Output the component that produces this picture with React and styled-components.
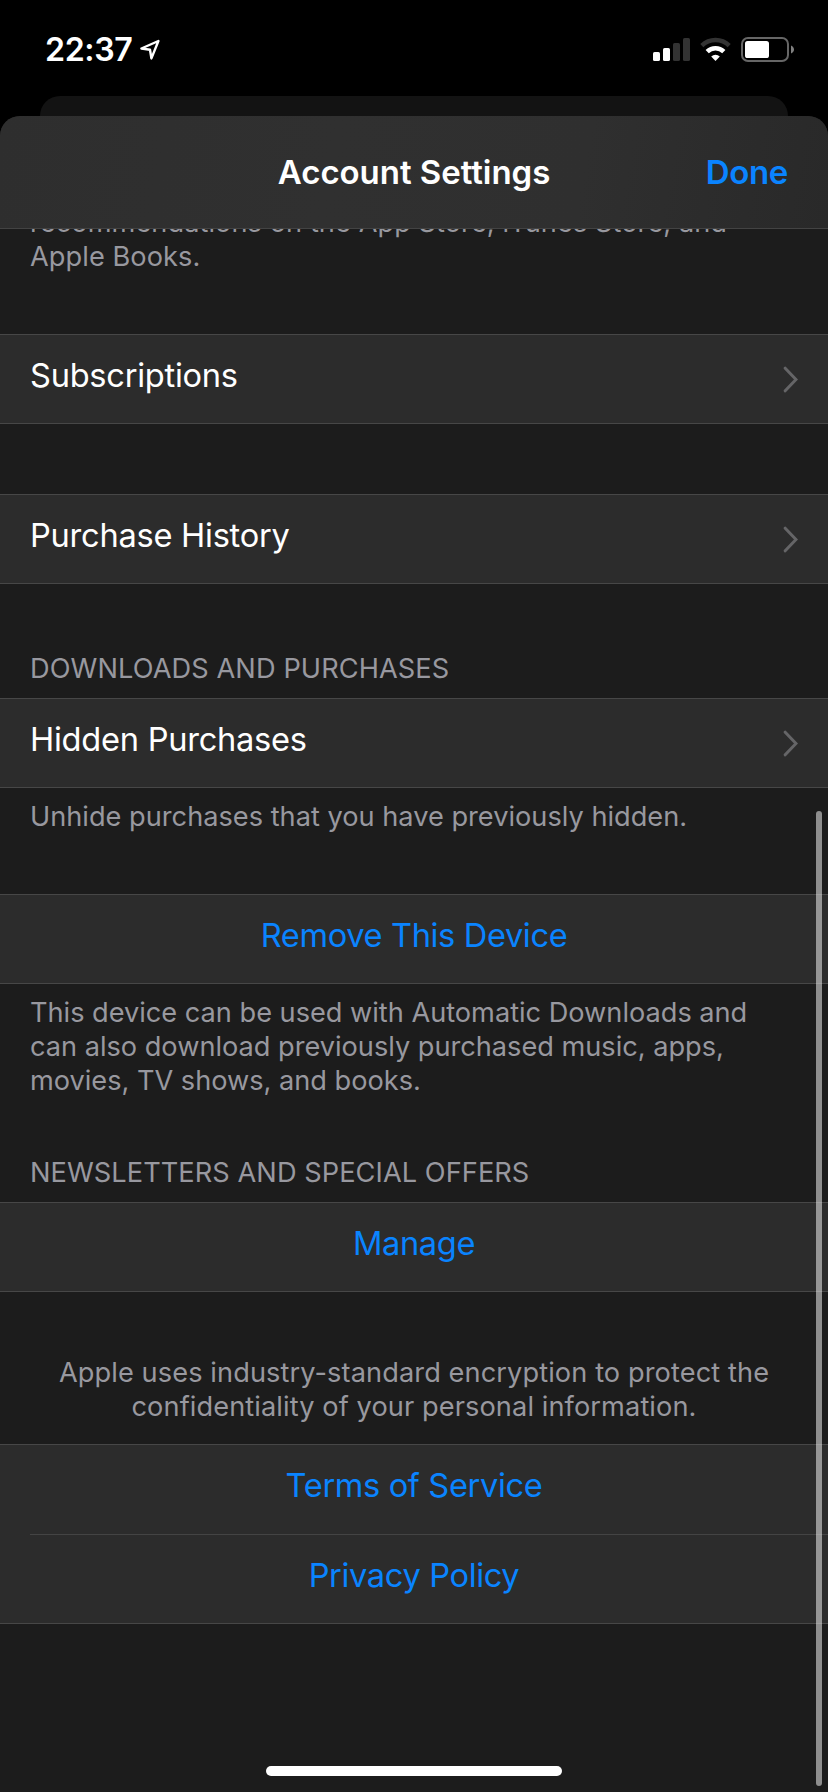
import styled, {createGlobalStyle} from "styled-components";

const GlobalStyle = createGlobalStyle`
* { box-sizing: border-box; }
body {
margin: 0;
background: #000;
font-family: Inter, "Liberation Sans", sans-serif;
}
`;
const Screen = styled.div`
display: flex;
flex-direction: column;
position: relative;
width: 828px;
height: 1792px;
overflow: hidden;
background: #000;
`;
const StatusBar = styled.div`
display: flex;
justify-content: space-between;
height: 96px;
padding: 30px 34px 0 45px;
`;
const Clock = styled.div`
display: flex;
height: 40px;
gap: 7px;
color: #fff;
font-size: 32.2px;
font-weight: 600;
letter-spacing: -0.4px;
line-height: 40px;
`;
const LocationIcon = styled.svg`
margin-top: 8px;
`;
const StatusIcons = styled.div`
display: flex;
gap: 10px;
padding-top: 7px;
`;
const BackCard = styled.div`
flex: none;
height: 20px;
margin: 0 40px;
border-radius: 20px 20px 0 0;
background: #131313;
`;
const Sheet = styled.div`
flex: 1;
min-height: 0;
display: flex;
flex-direction: column;
overflow: hidden;
border-radius: 20px 20px 0 0;
background: #1c1c1c;
`;
const SheetHeader = styled.div`
flex: none;
display: grid;
grid-template-columns: 1fr auto 1fr;
height: 113px;
padding: 36px 40px 0;
border-bottom: 1px solid #434343;
background: linear-gradient(100deg, #2e2e2e, #303030 40%, #2f2f2f 70%, #292929);
`;
const Title = styled.div`
grid-column: 2;
color: #fff;
font-size: 33px;
font-weight: 600;
letter-spacing: -0.05px;
line-height: 40px;
`;
const DoneButton = styled.div`
justify-self: end;
color: #0a84ff;
font-size: 33px;
font-weight: 600;
letter-spacing: -0.35px;
line-height: 40px;
`;
const Content = styled.div`
flex: 1;
min-height: 0;
overflow: hidden;
`;
const Note = styled.div`
margin: ${props => props.$margin};
padding: 0 30px;
color: #98989f;
font-size: 27.2px;
letter-spacing: ${props => props.$tracking || '0'};
line-height: 34px;
text-align: ${props => props.$center ? 'center' : 'left'};
white-space: nowrap;
`;
const Group = styled.div`
margin-bottom: ${props => props.$gap || '0'};
border-top: 1px solid #474747;
border-bottom: 1px solid #474747;
background: #2c2c2c;
`;
const Row = styled.div`
display: flex;
justify-content: ${props => props.$link ? 'center' : 'space-between'};
height: ${props => props.$divided ? '89px' : '88px'};
padding: 20px 30px 0;
color: ${props => props.$link ? '#0a84ff' : '#fff'};
font-size: 32.6px;
letter-spacing: ${props => props.$link ? '-0.35px' : '-0.25px'};
line-height: 40px;
`;
const Divider = styled.div`
height: 1px;
margin-left: 30px;
background: #444;
`;
const Chevron = styled.svg`
margin-top: 11px;
`;
const ScrollThumb = styled.div`
position: absolute;
top: 811px;
right: 6px;
width: 6px;
height: 975px;
border-radius: 3px;
background: rgba(255, 255, 255, 0.5);
`;
const HomeIndicator = styled.div`
position: absolute;
left: 266px;
bottom: 16px;
width: 296px;
height: 10px;
border-radius: 5px;
background: #fff;
`;

const Signal = () => (
    <svg width="37" height="25" viewBox="0 0 37 25">
        <rect x="0" y="15" width="7" height="9" rx="1.6" fill="#fff"/>
        <rect x="10" y="11" width="7" height="13" rx="1.6" fill="#fff"/>
        <rect x="20" y="6" width="7" height="18" rx="1.6" fill="#333"/>
        <rect x="30" y="1" width="7" height="23" rx="1.6" fill="#333"/>
    </svg>
)
const Wifi = () => (
    <svg width="31" height="25" viewBox="0 0 31 25">
        <path d="M1.8 8.6a19.6 19.6 0 0 1 27.4 0" fill="none" stroke="#333" strokeWidth="4.4"/>
        <path d="M7.2 14.6a12 12 0 0 1 16.6 0" fill="none" stroke="#fff" strokeWidth="4.6"/>
        <path d="M15.5 24l-4.3-4.5a6.4 6.4 0 0 1 8.6 0z" fill="#fff"/>
    </svg>
)
const Battery = () => (
    <svg width="53" height="25" viewBox="0 0 53 25">
        <rect x="1" y="1" width="46" height="23" rx="6" fill="none" stroke="#666" strokeWidth="2"/>
        <rect x="4" y="4" width="24" height="17" rx="2.6" fill="#fff"/>
        <path d="M50 8.4c4 1.6 4 6.6 0 8.2z" fill="#808080"/>
    </svg>
)

const NavRow = ({label, gap}) => (
    <Group $gap={gap}>
        <Row>
            <span>{label}</span>
            <Chevron width="16" height="28" viewBox="0 0 16 28">
                <path d="M3.2 2.2L14 13.5L3.2 24.8" fill="none" stroke="#656567" strokeWidth="3" strokeLinecap="round"/>
            </Chevron>
        </Row>
    </Group>
)
// one or more blue actions, split by an inset line
const LinkGroup = ({labels}) => (
    <Group>
        {labels.map((label, i) => (
            <div key={label}>
                {i > 0 && <Divider/>}
                <Row $link $divided={i < labels.length - 1}>{label}</Row>
            </div>
        ))}
    </Group>
)

const App = () => {
    return (
        <Screen>
            <GlobalStyle/>
            <StatusBar>
                <Clock>
                    <span>22:37</span>
                    <LocationIcon width="24" height="24" viewBox="0 0 24 24">
                        <path d="M2.4 10.5L19.4 3L12.4 20.4L11 11.8Z" fill="none" stroke="#fff" strokeWidth="2.4" strokeLinejoin="round"/>
                    </LocationIcon>
                </Clock>
                <StatusIcons>
                    <Signal/>
                    <Wifi/>
                    <Battery/>
                </StatusIcons>
            </StatusBar>
            <BackCard/>
            <Sheet>
                <SheetHeader>
                    <Title>Account Settings</Title>
                    <DoneButton>Done</DoneButton>
                </SheetHeader>
                <Content>
                    {/* scrolled partly under the header */}
                    <Note $margin="-23px 0 60px" $tracking="0.06px">
                        recommendations on the App Store, iTunes Store, and<br/>Apple Books.
                    </Note>
                    <NavRow label="Subscriptions" gap="70px"/>
                    <NavRow label="Purchase History"/>
                    <Note $margin="68px 0 12px" $tracking="0.09px">DOWNLOADS AND PURCHASES</Note>
                    <NavRow label="Hidden Purchases"/>
                    <Note $margin="12px 0 60px">Unhide purchases that you have previously hidden.</Note>
                    <LinkGroup labels={['Remove This Device']}/>
                    <Note $margin="12px 0 58px" $tracking="-0.02px">
                        This device can be used with Automatic Downloads and<br/>
                        can also download previously purchased music, apps,<br/>
                        movies, TV shows, and books.
                    </Note>
                    <Note $margin="0 0 12px" $tracking="0.06px">NEWSLETTERS AND SPECIAL OFFERS</Note>
                    <LinkGroup labels={['Manage']}/>
                    <Note $center $margin="64px 0 20px" $tracking="0.09px">
                        Apple uses industry-standard encryption to protect the<br/>
                        confidentiality of your personal information.
                    </Note>
                    <LinkGroup labels={['Terms of Service', 'Privacy Policy']}/>
                </Content>
            </Sheet>
            <ScrollThumb/>
            <HomeIndicator/>
        </Screen>
    )
};

export default App;
